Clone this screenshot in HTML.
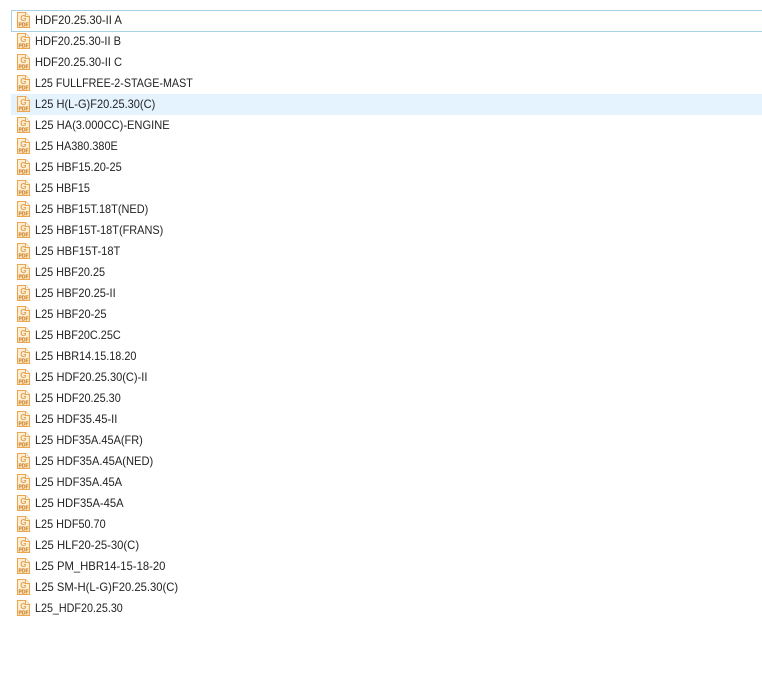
<!DOCTYPE html>
<html>
<head>
<meta charset="utf-8">
<style>
html,body{margin:0;padding:0;background:#fff;width:762px;height:678px;overflow:hidden}
body{position:relative;font-family:"Liberation Sans",sans-serif;font-size:12px;color:#222}
.r{position:absolute;left:11px;width:751px;height:21px;line-height:21px;white-space:nowrap}
.r span{position:absolute;left:24px;top:0;transform-origin:0 50%}
.r svg{position:absolute;left:5px;top:2px}
.sel{background:#e5f3ff}
.foc{position:absolute;left:11px;top:10px;width:751px;height:20px;border:1px solid #a9d1e6;border-right:0;background:#fffffd}
</style>
</head>
<body>
<svg width="0" height="0" style="position:absolute">
<defs>
<g id="i">
<path d="M1.5 .5H9.5L13.5 4.5V15.5H1.5Z" fill="#fdf0d8" stroke="#eca550" stroke-width="1.1"/>
<path d="M9.5 .5V4.5H13.5" fill="#fffaf0" stroke="#eca550"/>
<text x="7.4" y="9" text-anchor="middle" font-family="Liberation Sans" font-size="8" font-weight="bold" fill="#e3a356">G</text>
<rect x="2.5" y="10" width="10" height="5" fill="#fbe1b8"/>
<text x="7.5" y="14.5" text-anchor="middle" font-family="Liberation Sans" font-size="5" font-weight="bold" fill="#c67a22">PDF</text>
</g>
</defs>
</svg>
<div class="foc"></div>
<div class="r" style="top:10px"><svg width="15" height="16"><use href="#i"/></svg><span style="transform:scaleX(.937)">HDF20.25.30-II A</span></div>
<div class="r" style="top:31px"><svg width="15" height="16"><use href="#i"/></svg><span style="transform:scaleX(.921)">HDF20.25.30-II B</span></div>
<div class="r" style="top:52px"><svg width="15" height="16"><use href="#i"/></svg><span style="transform:scaleX(.926)">HDF20.25.30-II C</span></div>
<div class="r" style="top:73px"><svg width="15" height="16"><use href="#i"/></svg><span style="transform:scaleX(.894)">L25 FULLFREE-2-STAGE-MAST</span></div>
<div class="r sel" style="top:94px"><svg width="15" height="16"><use href="#i"/></svg><span style="transform:scaleX(.92)">L25 H(L-G)F20.25.30(C)</span></div>
<div class="r" style="top:115px"><svg width="15" height="16"><use href="#i"/></svg><span style="transform:scaleX(.926)">L25 HA(3.000CC)-ENGINE</span></div>
<div class="r" style="top:136px"><svg width="15" height="16"><use href="#i"/></svg><span style="transform:scaleX(.905)">L25 HA380.380E</span></div>
<div class="r" style="top:157px"><svg width="15" height="16"><use href="#i"/></svg><span style="transform:scaleX(.915)">L25 HBF15.20-25</span></div>
<div class="r" style="top:178px"><svg width="15" height="16"><use href="#i"/></svg><span style="transform:scaleX(.905)">L25 HBF15</span></div>
<div class="r" style="top:199px"><svg width="15" height="16"><use href="#i"/></svg><span style="transform:scaleX(.913)">L25 HBF15T.18T(NED)</span></div>
<div class="r" style="top:220px"><svg width="15" height="16"><use href="#i"/></svg><span style="transform:scaleX(.912)">L25 HBF15T-18T(FRANS)</span></div>
<div class="r" style="top:241px"><svg width="15" height="16"><use href="#i"/></svg><span style="transform:scaleX(.927)">L25 HBF15T-18T</span></div>
<div class="r" style="top:262px"><svg width="15" height="16"><use href="#i"/></svg><span style="transform:scaleX(.905)">L25 HBF20.25</span></div>
<div class="r" style="top:283px"><svg width="15" height="16"><use href="#i"/></svg><span style="transform:scaleX(.916)">L25 HBF20.25-II</span></div>
<div class="r" style="top:304px"><svg width="15" height="16"><use href="#i"/></svg><span style="transform:scaleX(.916)">L25 HBF20-25</span></div>
<div class="r" style="top:325px"><svg width="15" height="16"><use href="#i"/></svg><span style="transform:scaleX(.905)">L25 HBF20C.25C</span></div>
<div class="r" style="top:346px"><svg width="15" height="16"><use href="#i"/></svg><span style="transform:scaleX(.905)">L25 HBR14.15.18.20</span></div>
<div class="r" style="top:367px"><svg width="15" height="16"><use href="#i"/></svg><span style="transform:scaleX(.921)">L25 HDF20.25.30(C)-II</span></div>
<div class="r" style="top:388px"><svg width="15" height="16"><use href="#i"/></svg><span style="transform:scaleX(.905)">L25 HDF20.25.30</span></div>
<div class="r" style="top:409px"><svg width="15" height="16"><use href="#i"/></svg><span style="transform:scaleX(.928)">L25 HDF35.45-II</span></div>
<div class="r" style="top:430px"><svg width="15" height="16"><use href="#i"/></svg><span style="transform:scaleX(.913)">L25 HDF35A.45A(FR)</span></div>
<div class="r" style="top:451px"><svg width="15" height="16"><use href="#i"/></svg><span style="transform:scaleX(.928)">L25 HDF35A.45A(NED)</span></div>
<div class="r" style="top:472px"><svg width="15" height="16"><use href="#i"/></svg><span style="transform:scaleX(.926)">L25 HDF35A.45A</span></div>
<div class="r" style="top:493px"><svg width="15" height="16"><use href="#i"/></svg><span style="transform:scaleX(.936)">L25 HDF35A-45A</span></div>
<div class="r" style="top:514px"><svg width="15" height="16"><use href="#i"/></svg><span style="transform:scaleX(.905)">L25 HDF50.70</span></div>
<div class="r" style="top:535px"><svg width="15" height="16"><use href="#i"/></svg><span style="transform:scaleX(.94)">L25 HLF20-25-30(C)</span></div>
<div class="r" style="top:556px"><svg width="15" height="16"><use href="#i"/></svg><span style="transform:scaleX(.94)">L25 PM_HBR14-15-18-20</span></div>
<div class="r" style="top:577px"><svg width="15" height="16"><use href="#i"/></svg><span style="transform:scaleX(.937)">L25 SM-H(L-G)F20.25.30(C)</span></div>
<div class="r" style="top:598px"><svg width="15" height="16"><use href="#i"/></svg><span style="transform:scaleX(.895)">L25_HDF20.25.30</span></div>
</body>
</html>
